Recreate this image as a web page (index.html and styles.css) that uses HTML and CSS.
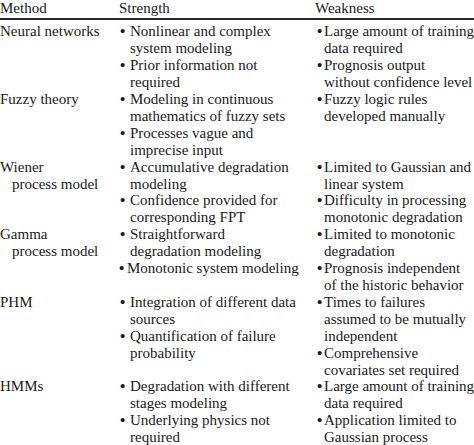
FILE: index.html
```html
<!DOCTYPE html>
<html>
<head>
<meta charset="utf-8">
<link rel="stylesheet" href="styles.css">
</head>
<body>
<div class="table">
  <div class="row head">
    <div class="cell">Method</div>
    <div class="cell">Strength</div>
    <div class="cell">Weakness</div>
  </div>
  <div class="body">
    <div class="row">
      <div class="cell method">Neural networks</div>
      <ul class="cell list strength">
        <li><span class="b">•</span><span>Nonlinear and complex<br>system modeling</span></li>
        <li><span class="b">•</span><span>Prior information not<br>required</span></li>
      </ul>
      <ul class="cell list weakness">
        <li><span class="b">•</span><span>Large amount of training<br>data required</span></li>
        <li><span class="b">•</span><span>Prognosis output<br>without confidence level</span></li>
      </ul>
    </div>
    <div class="row">
      <div class="cell method">Fuzzy theory</div>
      <ul class="cell list strength">
        <li><span class="b">•</span><span>Modeling in continuous<br>mathematics of fuzzy sets</span></li>
        <li><span class="b">•</span><span>Processes vague and<br>imprecise input</span></li>
      </ul>
      <ul class="cell list weakness">
        <li><span class="b">•</span><span>Fuzzy logic rules<br>developed manually</span></li>
      </ul>
    </div>
    <div class="row">
      <div class="cell method">Wiener<br>process model</div>
      <ul class="cell list strength">
        <li><span class="b">•</span><span>Accumulative degradation<br>modeling</span></li>
        <li><span class="b">•</span><span>Confidence provided for<br>corresponding FPT</span></li>
      </ul>
      <ul class="cell list weakness">
        <li><span class="b">•</span><span>Limited to Gaussian and<br>linear system</span></li>
        <li><span class="b">•</span><span>Difficulty in processing<br>monotonic degradation</span></li>
      </ul>
    </div>
    <div class="row">
      <div class="cell method">Gamma<br>process model</div>
      <ul class="cell list strength">
        <li><span class="b">•</span><span>Straightforward<br>degradation modeling</span></li>
        <li class="tight"><span class="b">•</span><span>Monotonic system modeling</span></li>
      </ul>
      <ul class="cell list weakness">
        <li><span class="b">•</span><span>Limited to monotonic<br>degradation</span></li>
        <li><span class="b">•</span><span>Prognosis independent<br>of the historic behavior</span></li>
      </ul>
    </div>
    <div class="row">
      <div class="cell method">PHM</div>
      <ul class="cell list strength">
        <li><span class="b">•</span><span>Integration of different data<br>sources</span></li>
        <li><span class="b">•</span><span>Quantification of failure<br>probability</span></li>
      </ul>
      <ul class="cell list weakness">
        <li><span class="b">•</span><span>Times to failures<br>assumed to be mutually<br>independent</span></li>
        <li><span class="b">•</span><span>Comprehensive<br>covariates set required</span></li>
      </ul>
    </div>
    <div class="row">
      <div class="cell method">HMMs</div>
      <ul class="cell list strength">
        <li><span class="b">•</span><span>Degradation with different<br>stages modeling</span></li>
        <li><span class="b">•</span><span>Underlying physics not<br>required</span></li>
      </ul>
      <ul class="cell list weakness">
        <li><span class="b">•</span><span>Large amount of training<br>data required</span></li>
        <li><span class="b">•</span><span>Application limited to<br>Gaussian process</span></li>
      </ul>
    </div>
  </div>
</div>
</body>
</html>
```
FILE: styles.css
```css
html, body {
  margin: 0;
  padding: 0;
  background: #ffffff;
}
body {
  font-family: "Liberation Serif", "Times New Roman", serif;
  font-size: 15px;
  line-height: 16.9px;
  color: #1a1a1a;
  overflow: hidden;
  white-space: nowrap;
}
.table {
  width: 474px;
}
.row {
  display: grid;
  grid-template-columns: 119px 196px 1fr;
}
.head {
  padding-bottom: 1px;
  border-bottom: 2px solid #2a2a2a;
}
.body {
  padding-top: 3.5px;
}
.cell {
  margin: 0;
  padding: 0;
}
.method {
  padding-left: 12px;
  text-indent: -12px;
}
.list {
  list-style: none;
}
.list li {
  display: flex;
}
.b {
  flex: none;
  font-size: 15px;
  font-weight: bold;
}
.strength .b {
  width: 10px;
  padding-left: 1px;
}
.weakness .b {
  width: 7px;
  padding-left: 2px;
}
.strength li.tight .b {
  width: 8px;
  padding-left: 0;
}
```
